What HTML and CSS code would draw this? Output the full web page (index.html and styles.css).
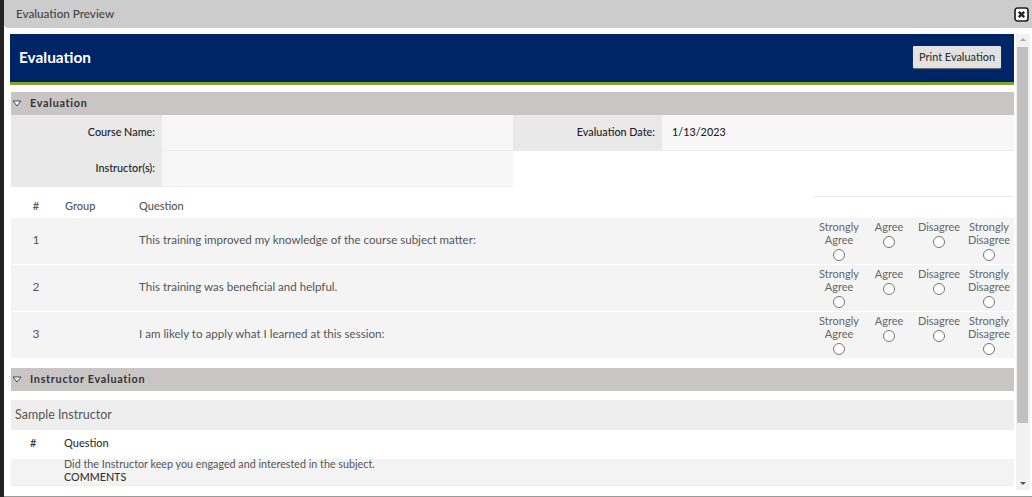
FILE: index.html
```html
<!DOCTYPE html>
<html>
<head>
    <title>Evaluation Preview</title>
    <link rel="stylesheet" href="styles.css">
</head>
<body>
    <div class="dialog">
        <div class="titlebar">
            <span>Evaluation Preview</span>
            <span class="close-btn">
                <svg width="15" height="15" viewBox="0 0 15 15">
                    <rect x="1" y="1" width="13" height="13" rx="2.5" fill="#fff" stroke="#222" stroke-width="1.7"/>
                    <path d="M4.8 4.8l5.4 5.4M10.2 4.8l-5.4 5.4" stroke="#222" stroke-width="2.4" fill="none"/>
                </svg>
            </span>
        </div>
        <div class="dialog-main">
            <div class="content">
                <div class="banner">
                    <span class="banner-title">Evaluation</span>
                    <button class="print-btn">Print Evaluation</button>
                </div>

                <div class="section-header">
                    <svg class="caret" width="10" height="7" viewBox="0 0 10 7"><path d="M1 1h8L5 6z" fill="#fff" stroke="#444" stroke-width="1"/></svg>
                    <span>Evaluation</span>
                </div>
                <div class="info-grid">
                    <div class="info-label">Course Name:</div>
                    <div class="info-value"></div>
                    <div class="info-label">Evaluation Date:</div>
                    <div class="info-value">1/13/2023</div>
                    <div class="info-label">Instructor(s):</div>
                    <div class="info-value"></div>
                </div>

                <div class="rating-rule"></div>
                <div class="question-head">
                    <div class="col-num">#</div>
                    <div class="col-group">Group</div>
                    <div>Question</div>
                </div>
                <div class="question-row">
                    <div class="col-num">1</div>
                    <div class="col-group"></div>
                    <div class="col-text">This training improved my knowledge of the course subject matter:</div>
                    <div class="ratings">
                        <label>Strongly Agree<i class="radio"></i></label>
                        <label>Agree<i class="radio"></i></label>
                        <label>Disagree<i class="radio"></i></label>
                        <label>Strongly Disagree<i class="radio"></i></label>
                    </div>
                </div>
                <div class="question-row">
                    <div class="col-num">2</div>
                    <div class="col-group"></div>
                    <div class="col-text">This training was beneficial and helpful.</div>
                    <div class="ratings">
                        <label>Strongly Agree<i class="radio"></i></label>
                        <label>Agree<i class="radio"></i></label>
                        <label>Disagree<i class="radio"></i></label>
                        <label>Strongly Disagree<i class="radio"></i></label>
                    </div>
                </div>
                <div class="question-row">
                    <div class="col-num">3</div>
                    <div class="col-group"></div>
                    <div class="col-text">I am likely to apply what I learned at this session:</div>
                    <div class="ratings">
                        <label>Strongly Agree<i class="radio"></i></label>
                        <label>Agree<i class="radio"></i></label>
                        <label>Disagree<i class="radio"></i></label>
                        <label>Strongly Disagree<i class="radio"></i></label>
                    </div>
                </div>

                <div class="section-header section-second">
                    <svg class="caret" width="10" height="7" viewBox="0 0 10 7"><path d="M1 1h8L5 6z" fill="#fff" stroke="#444" stroke-width="1"/></svg>
                    <span>Instructor Evaluation</span>
                </div>
                <div class="instructor-name">Sample Instructor</div>
                <div class="instructor-head">
                    <div class="col-num-small">#</div>
                    <div>Question</div>
                </div>
                <div class="instructor-row">
                    <div class="col-num-small"></div>
                    <div class="instructor-text">
                        Did the Instructor keep you engaged and interested in the subject.
                        <div class="comments">COMMENTS</div>
                    </div>
                </div>
            </div>
            <div class="scrollbar">
                <span class="arrow-up"></span>
                <div class="thumb"></div>
                <span class="arrow-down"></span>
            </div>
        </div>
    </div>
</body>
</html>
```

FILE: styles.css
```css
html, body {
    height: 100%;
}

body {
    font-family: Lato, "Open Sans", sans-serif;
    margin: 0;
    padding-left: 4px;
    background-color: #222;
    color: #555;
    font-size: 12px;
    overflow: hidden;
}

.dialog {
    height: 496px;
    background-color: #fff;
    border-bottom: 1px solid #999;
    display: flex;
    flex-direction: column;
}

.titlebar {
    height: 28px;
    padding: 0 3px 0 12px;
    box-sizing: border-box;
    background-color: #ccc;
    border-radius: 0 0 0 4px;
    color: #444;
    font-size: 11.7px;
    font-weight: 500;
    display: flex;
    justify-content: space-between;
    align-items: center;
    flex-shrink: 0;
}

.titlebar > span:first-child {
    padding-bottom: 3px;
}

.close-btn {
    display: flex;
}

.dialog-main {
    display: flex;
    flex-grow: 1;
    min-height: 0;
    padding: 6px 2px 0 6px;
}

.content {
    width: 1004px;
    flex-shrink: 0;
}

.banner {
    height: 48px;
    background-color: #002567;
    border-bottom: 3px solid #84a52d;
    padding: 0 13px 0 9px;
    display: flex;
    justify-content: space-between;
    align-items: center;
}

.banner-title {
    color: #fff;
    font-size: 15.4px;
    font-weight: 700;
    padding-bottom: 3px;
}

.print-btn {
    height: 22px;
    margin-bottom: 2px;
    padding: 0 6px 2px;
    background-color: #e2e2e2;
    color: #333;
    border: none;
    border-radius: 1px;
    font-family: inherit;
    font-size: 10.9px;
    font-weight: 500;
    box-shadow: 0 1px 1px #777;
}

.section-header {
    height: 23px;
    margin: 7px 0 0 1px;
    padding-bottom: 2px;
    box-sizing: border-box;
    background-color: #c9c5c5;
    color: #333;
    font-size: 10.8px;
    font-weight: 700;
    letter-spacing: 0.72px;
    display: flex;
    align-items: center;
}

.section-second {
    margin-top: 10px;
    padding-bottom: 3px;
}

.caret {
    margin: 2px 8px 0 1px;
}

.info-grid {
    margin-left: 1px;
    display: grid;
    grid-template-columns: 151px 351px 149px 352px;
    grid-auto-rows: 36px;
}

.info-label {
    background-color: #e9e9e9;
    color: #222;
    font-size: 10.8px;
    font-weight: 500;
    padding: 0 7px 3px 0;
    display: flex;
    justify-content: flex-end;
    align-items: center;
}

.info-value {
    background-color: #f7f7f7;
    border-bottom: 1px solid #eee;
    color: #222;
    font-size: 10.8px;
    font-weight: 500;
    padding: 0 0 3px 10px;
    display: flex;
    align-items: center;
}

.rating-rule {
    height: 1px;
    width: 201px;
    margin: 9px 0 0 803px;
    background-color: #e8e8e8;
}

.question-head {
    height: 21px;
    margin-left: 1px;
    padding-bottom: 5px;
    box-sizing: border-box;
    font-size: 11px;
    font-weight: 500;
    color: #555;
    display: flex;
    align-items: center;
}

.col-num {
    width: 50px;
    text-align: center;
}

.col-group {
    width: 78px;
    padding-left: 4px;
    box-sizing: border-box;
}

.question-row {
    height: 46px;
    margin: 0 0 1px 1px;
    background-color: #f4f4f4;
    display: flex;
    align-items: center;
}

.question-row .col-num,
.col-text {
    padding-bottom: 3px;
}

.col-text {
    flex-grow: 1;
    font-size: 11.55px;
}

.ratings {
    width: 201px;
    height: 100%;
    padding: 2px 0 0 1px;
    box-sizing: border-box;
    display: flex;
    line-height: 13px;
    font-size: 11px;
    color: #666;
    flex-shrink: 0;
}

.ratings label {
    width: 50px;
    text-align: center;
}

.radio {
    display: block;
    width: 10px;
    height: 10px;
    margin: 3px auto 0;
    border: 1px solid #777;
    border-radius: 50%;
    background-color: #fff;
}

.instructor-name {
    height: 30px;
    margin: 9px 0 0 1px;
    padding: 0 0 2px 4px;
    box-sizing: border-box;
    background-color: #eee;
    font-size: 12.5px;
    display: flex;
    align-items: center;
}

.instructor-head {
    height: 29px;
    margin-left: 1px;
    padding-bottom: 5px;
    box-sizing: border-box;
    color: #333;
    font-size: 11px;
    font-weight: 500;
    display: flex;
    align-items: center;
}

.col-num-small {
    width: 53px;
    padding-left: 19px;
    box-sizing: border-box;
    flex-shrink: 0;
}

.instructor-row {
    height: 26px;
    margin-left: 1px;
    background-color: #f3f3f3;
    display: flex;
    border-bottom: 1px solid #eee;
}

.instructor-text {
    margin-top: -2px;
    font-size: 10.76px;
    line-height: 13px;
}

.comments {
    color: #333;
    font-weight: 500;
}

.scrollbar {
    width: 14px;
    height: 456px;
    margin-left: 2px;
    background-color: #f1f1f1;
    position: relative;
}

.thumb {
    width: 11px;
    height: 376px;
    margin: 13px 0 0 1px;
    background-color: #c1c1c1;
}

.arrow-up,
.arrow-down {
    position: absolute;
    right: 4px;
    width: 0;
    height: 0;
    border-left: 3px solid transparent;
    border-right: 3px solid transparent;
}

.arrow-up {
    top: 4px;
    border-bottom: 3px solid #aaa;
}

.arrow-down {
    bottom: 5px;
    border-top: 3px solid #555;
}
```
